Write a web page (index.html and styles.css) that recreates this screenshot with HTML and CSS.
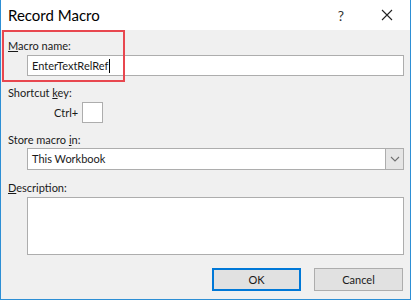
FILE: index.html
```html
<!DOCTYPE html>
<html lang="en">
<head>
  <meta charset="UTF-8">
  <title>Record Macro</title>
  <link rel="stylesheet" href="styles.css">
</head>
<body>
  <div class="dialog">
    <div class="titlebar">
      <span class="title">Record Macro</span>
      <span class="help">?</span>
      <span class="close">
        <svg width="12" height="12" viewBox="0 0 12 12">
          <path d="M1 1 L11 11 M11 1 L1 11" stroke="#222" stroke-width="1.1" fill="none"/>
        </svg>
      </span>
    </div>

    <div class="content">
      <div class="label first"><u>M</u>acro name:</div>
      <div class="field">EnterTextRelRef<span class="caret"></span></div>

      <div class="label gap"><span>Shortcut </span><u>k</u>ey:</div>
      <div class="ctrl-row">
        <span class="ctrl-label">Ctrl+</span>
        <div class="key-box"></div>
      </div>

      <div class="label gap">Store macro <u>i</u>n:</div>
      <div class="combo">
        <span class="combo-text">This Workbook</span>
        <span class="combo-btn">
          <svg width="10" height="6" viewBox="0 0 10 6">
            <path d="M1 1 L5 5 L9 1" stroke="#707070" stroke-width="1.1" fill="none"/>
          </svg>
        </span>
      </div>

      <div class="label gap-desc"><u>D</u>escription:</div>
      <div class="textarea"></div>

      <div class="buttons">
        <button class="btn default">OK</button>
        <button class="btn">Cancel</button>
      </div>
    </div>

    <!-- annotation over the macro name field -->
    <div class="highlight"></div>
  </div>
</body>
</html>
```

FILE: styles.css
```css
:root {
  --win-border: #2d8fd5;
  --dialog-bg: #f0f0f0;
  --field-border: #adadad;
  --text: #1a1a1a;
  --mark: #e8474f;
}

body {
  margin: 0;
  font-family: "Segoe UI", Lato, "Noto Sans", sans-serif;
  color: var(--text);
}

.dialog {
  position: relative;
  width: 411px;
  height: 300px;
  box-sizing: border-box;
  border: 1px solid var(--win-border);
  border-top: none;
  background-color: var(--dialog-bg);
  display: flex;
  flex-direction: column;
}

.titlebar {
  height: 30px;
  background-color: #fff;
  display: flex;
  align-items: center;
  padding: 0 0 0 7px;
}

.title {
  font-size: 15px;
  flex: 1;
  color: #000;
}

.help {
  font-size: 14px;
  width: 46px;
  text-align: center;
  color: #333;
}

.close {
  width: 46px;
  display: flex;
  justify-content: center;
}

.content {
  padding: 8px 6px 0 7px;
  font-size: 11px;
}

.label {
  line-height: 16px;
  height: 16px;
}

.label.gap {
  margin-top: 9px;
}

.label.gap-desc {
  margin-top: 10px;
}

.field {
  margin: 1px 0 0 19px;
  height: 21px;
  box-sizing: border-box;
  border: 1px solid var(--field-border);
  background-color: #fff;
  padding: 0 4px;
  line-height: 19px;
  display: flex;
  align-items: center;
}

.caret {
  display: inline-block;
  width: 1px;
  height: 14px;
  background-color: #000;
  margin-left: 1px;
}

.ctrl-row {
  margin: 1px 0 0 46px;
  display: flex;
  align-items: center;
  gap: 4px;
}

.key-box {
  width: 21px;
  height: 21px;
  box-sizing: border-box;
  border: 1px solid var(--field-border);
  background-color: #fff;
}

.combo {
  margin: 0 0 0 19px;
  height: 22px;
  box-sizing: border-box;
  border: 1px solid var(--field-border);
  background-color: #fff;
  display: flex;
}

.combo-text {
  flex: 1;
  padding: 0 4px;
  line-height: 20px;
}

.combo-btn {
  width: 17px;
  background-color: #e5e5e5;
  border-left: 1px solid var(--field-border);
  display: flex;
  align-items: center;
  justify-content: center;
}

.textarea {
  margin: 1px 0 0 19px;
  height: 58px;
  box-sizing: border-box;
  border: 1px solid var(--field-border);
  background-color: #fff;
}

.buttons {
  margin-top: 13px;
  display: flex;
  justify-content: flex-end;
  gap: 13px;
  padding-right: 1px;
}

.btn {
  width: 89px;
  height: 23px;
  font-family: inherit;
  font-size: 11px;
  color: var(--text);
  background-color: #e1e1e1;
  border: 1px solid var(--field-border);
  padding: 0;
}

.btn.default {
  border: 2px solid #0078d7;
}

.highlight {
  position: absolute;
  left: 1px;
  top: 30px;
  width: 123px;
  height: 52px;
  box-sizing: border-box;
  border: 2px solid var(--mark);
}
```
